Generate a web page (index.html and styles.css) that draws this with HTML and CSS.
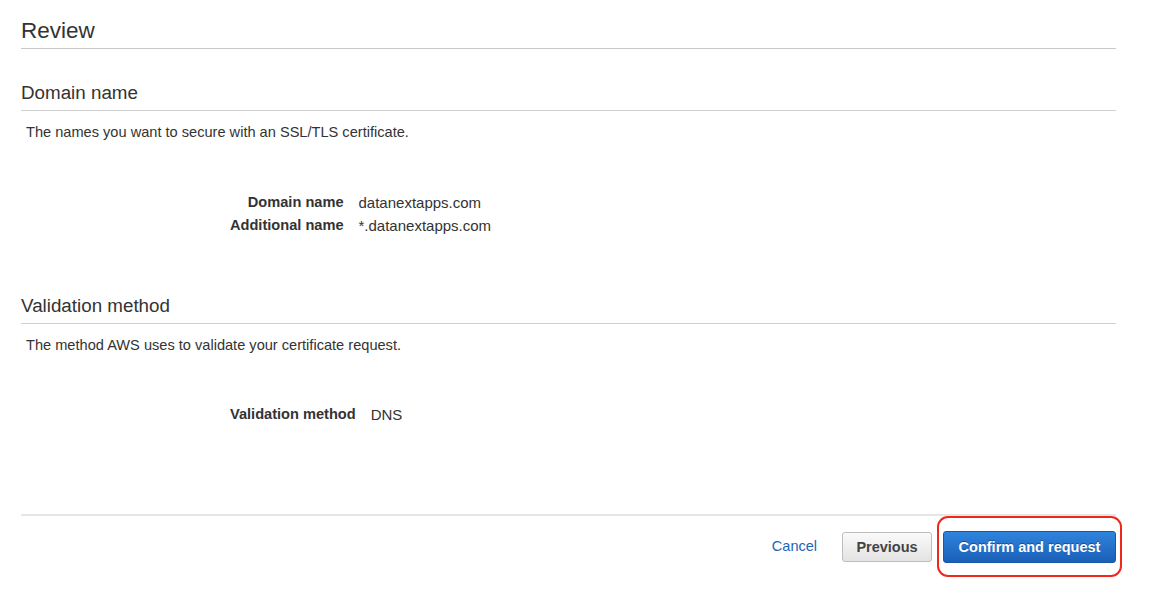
FILE: index.html
```html
<!DOCTYPE html>
<html lang="en">
<head>
  <meta charset="UTF-8">
  <title>Review</title>
  <link rel="stylesheet" href="styles.css">
</head>
<body>
  <div id="review">
    <h1 class="page-title">Review</h1>

    <!-- Domain names -->
    <section class="section">
      <h2 class="section-title">Domain name</h2>
      <p class="section-desc">The names you want to secure with an SSL/TLS certificate.</p>
      <div class="details">
        <div class="label">Domain name</div>
        <div class="value">datanextapps.com</div>
        <div class="label">Additional name</div>
        <div class="value">*.datanextapps.com</div>
      </div>
    </section>

    <!-- Validation -->
    <section class="section section-validation">
      <h2 class="section-title">Validation method</h2>
      <p class="section-desc">The method AWS uses to validate your certificate request.</p>
      <div class="details">
        <div class="label">Validation method</div>
        <div class="value">DNS</div>
      </div>
    </section>

    <div class="footer">
      <a href="#" class="cancel-link">Cancel</a>
      <button class="btn btn-secondary">Previous</button>
      <span class="highlighted">
        <button class="btn btn-primary">Confirm and request</button>
      </span>
    </div>
  </div>
</body>
</html>
```

FILE: styles.css
```css
/* Global */
body {
  margin: 0;
  padding: 18px 38px 40px 21px;
  font-family: 'Liberation Sans', Arial, Helvetica, sans-serif;
  color: #333;
  background: #fff;
}

.page-title {
  margin: 0;
  font-size: 22.5px;
  font-weight: normal;
  line-height: 26px;
  padding-bottom: 4px;
  border-bottom: 1px solid #c9c9c9;
}

/* Sections */
.section {
  margin-top: 33px;
}
.section-validation {
  margin-top: 58px;
}
.section-title {
  margin: 0;
  font-size: 18.8px;
  font-weight: normal;
  line-height: 22px;
  padding-bottom: 6px;
  border-bottom: 1px solid #d0d0d0;
}
.section-desc {
  margin: 11px 0 0;
  padding-left: 5px;
  font-size: 14.6px;
  line-height: 20px;
}

.details {
  display: grid;
  grid-template-columns: auto auto;
  justify-content: start;
  column-gap: 15px;
  margin-top: 49px;
  padding-left: 209px;
  font-size: 14.6px;
  line-height: 23px;
}
.section-validation .details {
  margin-top: 48px;
}
.label {
  text-align: right;
  font-weight: bold;
}
.value {
  font-size: 15px;
}

/* Footer buttons */
.footer {
  display: flex;
  justify-content: flex-end;
  align-items: center;
  margin-top: 88px;
  padding-top: 15px;
  border-top: 2px solid #e6e6e6;
}
.cancel-link {
  color: #2364b4;
  text-decoration: none;
  font-size: 14.5px;
  margin-right: 25px;
  margin-top: -2px;
}
.btn {
  font-family: inherit;
  font-size: 14.5px;
  font-weight: bold;
  border-radius: 3px;
  cursor: pointer;
}
.btn-secondary {
  width: 90px;
  height: 30px;
  color: #444;
  background: linear-gradient(#fafafa, #e3e3e3);
  border: 1px solid #bdbdbd;
  margin-right: 11px;
}
.btn-primary {
  display: block;
  width: 173px;
  height: 32px;
  color: #fff;
  background: linear-gradient(#2f84dd, #1a5fb8);
  border: 1px solid #1757a8;
  text-shadow: 0 -1px 0 rgba(0, 0, 0, 0.35);
}
.highlighted {
  position: relative;
  display: block;
}
.highlighted::after {
  content: '';
  position: absolute;
  left: -6px;
  right: -6px;
  top: -15px;
  bottom: -14px;
  border: 2px solid #f0271c;
  border-radius: 11px;
  pointer-events: none;
}
```
